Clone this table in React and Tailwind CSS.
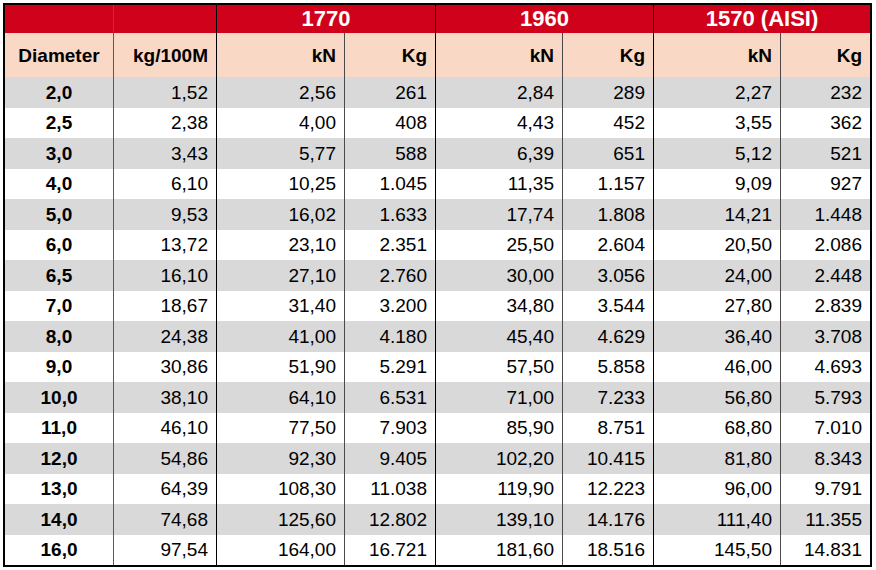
import React from "react";

const rows = [
  ["2,0","1,52","2,56","261","2,84","289","2,27","232"],
  ["2,5","2,38","4,00","408","4,43","452","3,55","362"],
  ["3,0","3,43","5,77","588","6,39","651","5,12","521"],
  ["4,0","6,10","10,25","1.045","11,35","1.157","9,09","927"],
  ["5,0","9,53","16,02","1.633","17,74","1.808","14,21","1.448"],
  ["6,0","13,72","23,10","2.351","25,50","2.604","20,50","2.086"],
  ["6,5","16,10","27,10","2.760","30,00","3.056","24,00","2.448"],
  ["7,0","18,67","31,40","3.200","34,80","3.544","27,80","2.839"],
  ["8,0","24,38","41,00","4.180","45,40","4.629","36,40","3.708"],
  ["9,0","30,86","51,90","5.291","57,50","5.858","46,00","4.693"],
  ["10,0","38,10","64,10","6.531","71,00","7.233","56,80","5.793"],
  ["11,0","46,10","77,50","7.903","85,90","8.751","68,80","7.010"],
  ["12,0","54,86","92,30","9.405","102,20","10.415","81,80","8.343"],
  ["13,0","64,39","108,30","11.038","119,90","12.223","96,00","9.791"],
  ["14,0","74,68","125,60","12.802","139,10","14.176","111,40","11.355"],
  ["16,0","97,54","164,00","16.721","181,60","18.516","145,50","14.831"],
];

const grid = "grid grid-cols-[109px_103px_128px_91px_127px_91px_127px_89px]";
const borders = [
  "border-r border-[#5a5a5a]",
  "border-r border-black",
  "border-r border-[#4a4a4a]",
  "border-r border-black",
  "border-r border-[#4a4a4a]",
  "border-r border-black",
  "border-r border-[#4a4a4a]",
  "",
];

export default function App() {
  return (
    <div className="w-[876px] h-[570px] bg-white pt-[3px] pl-[3px] font-['Liberation_Sans',Arial,sans-serif] text-[19px] text-black">
      <div className="w-[869px] border-2 border-black">
        <div className={`${grid} h-[28px] bg-[#d0021b] text-white font-bold text-[22px]`}>
          <div className={borders[0]} />
          <div className={borders[1]} />
          <div className="col-span-2 flex items-center justify-center border-r border-black leading-none">1770</div>
          <div className="col-span-2 flex items-center justify-center border-r border-black leading-none">1960</div>
          <div className="col-span-2 flex items-center justify-center leading-none">1570 (AISI)</div>
        </div>
        <div className={`${grid} h-[44px] bg-[#f9d8c6] font-bold`}>
          {["Diameter","kg/100M","kN","Kg","kN","Kg","kN","Kg"].map((t, i) => (
            <div
              key={i}
              className={`${borders[i]} flex items-center leading-none ${i === 0 ? "justify-center" : "justify-end pr-2"}`}
            >
              {t}
            </div>
          ))}
        </div>
        {rows.map((r, ri) => (
          <div key={ri} className={`${grid} h-[30.5px] ${ri % 2 === 0 ? "bg-[#d9d9da]" : "bg-white"}`}>
            {r.map((c, i) => (
              <div
                key={i}
                className={`${borders[i]} flex items-center leading-none ${i === 0 ? "justify-center font-bold" : "justify-end pr-2"}`}
              >
                {c}
              </div>
            ))}
          </div>
        ))}
      </div>
    </div>
  );
}
